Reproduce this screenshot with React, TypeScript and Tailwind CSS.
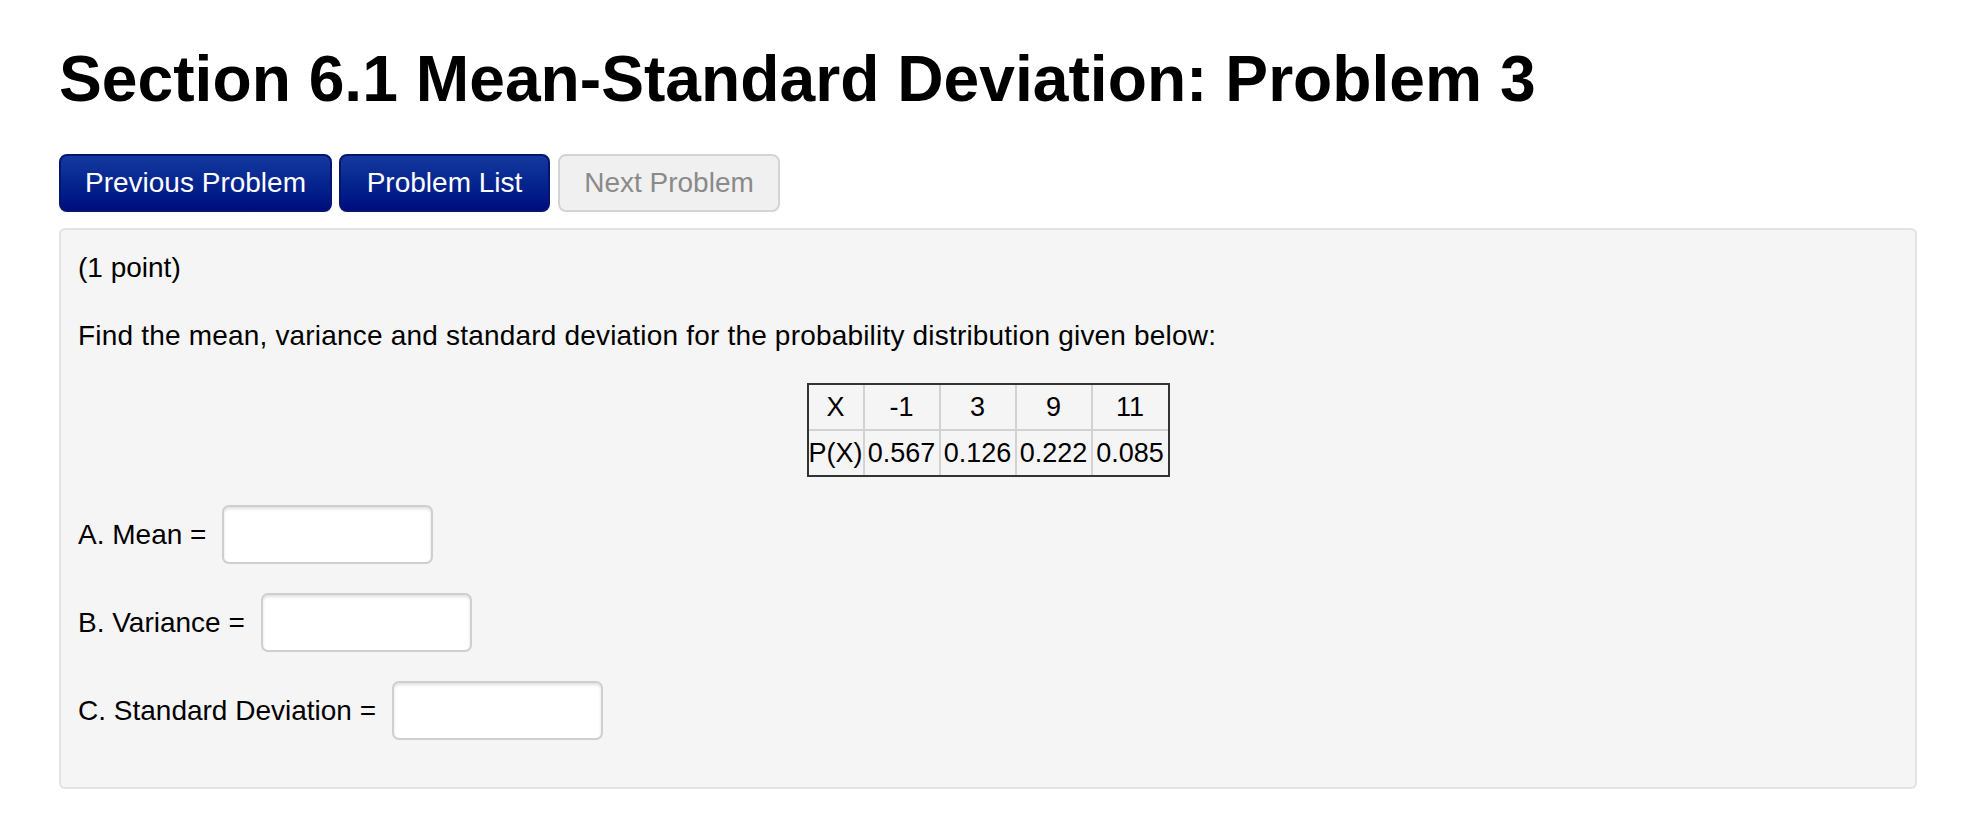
import React from 'react';

const font = { fontFamily: '"Liberation Sans", Arial, sans-serif' };

const xs = ['-1', '3', '9', '11'];
const ps = ['0.567', '0.126', '0.222', '0.085'];

function Answer({ label }: { label: string }) {
  return (
    <div className="flex items-center">
      <span className="mr-[16px]">{label}</span>
      <input
        type="text"
        className="h-[59px] w-[211px] rounded-[7px] border-2 border-[#cfcfcf] bg-white px-2 shadow-[inset_0_2px_3px_rgba(0,0,0,0.12)] outline-none"
      />
    </div>
  );
}

export default function App() {
  return (
    <div className="min-h-screen bg-white text-black" style={font}>
      <div className="pl-[59px] pr-[62px] pt-[44px]">
        <h1 className="text-[64.2px] font-bold leading-[70px]">
          Section 6.1 Mean-Standard Deviation: Problem 3
        </h1>

        {/* навигация по задачам */}
        <div className="mt-[40px] flex gap-[7px] text-[28px] leading-[40px]">
          <button className="h-[58px] w-[273px] rounded-[8px] border-2 border-[#06156e] bg-gradient-to-b from-[#15399f] to-[#000a7e] text-white">
            Previous Problem
          </button>
          <button className="h-[58px] w-[211px] rounded-[8px] border-2 border-[#06156e] bg-gradient-to-b from-[#15399f] to-[#000a7e] text-white">
            Problem List
          </button>
          <button className="ml-[1px] h-[58px] w-[222px] rounded-[8px] border-2 border-[#d4d4d4] bg-[#f0f0f0] text-[#8a8a8a]">
            Next Problem
          </button>
        </div>

        {/* условие задачи */}
        <div className="mt-[16px] rounded-[6px] border-2 border-[#e3e3e3] bg-[#f5f5f5] px-[17px] pb-[47px] pt-[18px] text-[28px] leading-[40px]">
          <p>(1 point)</p>
          <p className="mt-[28px] tracking-[0.19px]">
            Find the mean, variance and standard deviation for the probability distribution given below:
          </p>

          <div className="mt-[27px] flex justify-center">
            <div className="border-2 border-[#333]">
              <table className="border-collapse text-[27px] leading-[40px]">
                <tbody>
                  <tr className="h-[45px]">
                    <td className="w-[54px] border-b-2 border-r-2 border-[#d2d2d2] p-0 text-center">X</td>
                    {xs.map((x, i) => (
                      <td
                        key={x}
                        className={`w-[76px] border-b-2 border-[#d2d2d2] p-0 text-center ${i < 3 ? 'border-r-2' : ''}`}
                      >
                        {x}
                      </td>
                    ))}
                  </tr>
                  <tr className="h-[45px]">
                    <td className="border-r-2 border-[#d2d2d2] p-0 text-center">P(X)</td>
                    {ps.map((p, i) => (
                      <td
                        key={p}
                        className={`border-[#d2d2d2] p-0 text-center ${i < 3 ? 'border-r-2' : ''}`}
                      >
                        {p}
                      </td>
                    ))}
                  </tr>
                </tbody>
              </table>
            </div>
          </div>

          <div className="mt-[28px] flex flex-col gap-[29px]">
            <Answer label="A. Mean =" />
            <Answer label="B. Variance =" />
            <Answer label="C. Standard Deviation =" />
          </div>
        </div>
      </div>
    </div>
  );
}
